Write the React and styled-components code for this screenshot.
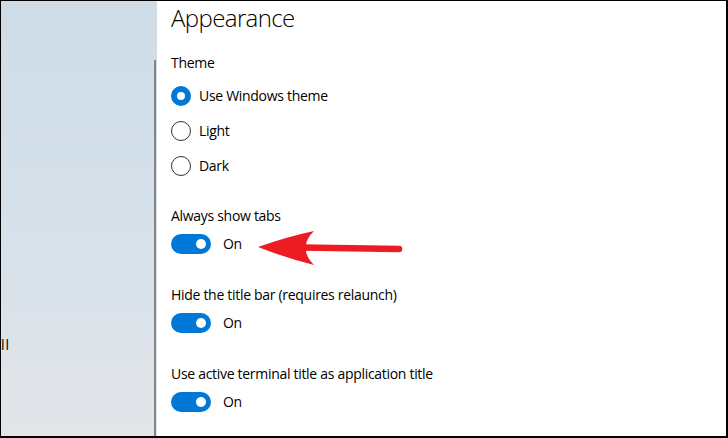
import React from "react";
import styled, { createGlobalStyle } from "styled-components";

const FONT = `"Segoe UI", "Open Sans", "Noto Sans", sans-serif`;

const GlobalStyle = createGlobalStyle`
  html, body {
    margin: 0;
    padding: 0;
    background: #ffffff;
  }
  body {
    font-family: ${FONT};
    color: #000000;
  }
`;

const themeOptions = [
  { label: "Use Windows theme", checked: true },
  { label: "Light", checked: false },
  { label: "Dark", checked: false },
];

const toggles = [
  "Always show tabs",
  "Hide the title bar (requires relaunch)",
  "Use active terminal title as application title",
];

export default function App() {
  return (
    <>
      <GlobalStyle />
      <StyledFrame>
        <StyledSidebar>
          <StyledNavColumn>
            <StyledNavText>ll</StyledNavText>
          </StyledNavColumn>
          <StyledScrollThumb />
        </StyledSidebar>
        <StyledContent>
          <StyledHeading>Appearance</StyledHeading>
          <StyledLabel>Theme</StyledLabel>
          <StyledRadioList>
            {themeOptions.map((option) => (
              <StyledRadioRow key={option.label}>
                <StyledRadio $checked={option.checked} />
                <StyledOptionText>{option.label}</StyledOptionText>
              </StyledRadioRow>
            ))}
          </StyledRadioList>
          <StyledToggleGroups>
            {toggles.map((name) => (
              <StyledToggleGroup key={name}>
                <StyledLabel>{name}</StyledLabel>
                <StyledToggleRow>
                  <StyledToggle>
                    <StyledKnob />
                  </StyledToggle>
                  <StyledToggleText>On</StyledToggleText>
                </StyledToggleRow>
              </StyledToggleGroup>
            ))}
          </StyledToggleGroups>
        </StyledContent>
        <StyledArrow viewBox="0 0 728 438" aria-hidden="true">
          <line
            x1="302"
            y1="247.5"
            x2="399"
            y2="249"
            stroke="#ed1c24"
            strokeWidth="6.5"
            strokeLinecap="round"
          />
          <path
            d="M258 247 Q286 237 314 231 Q305 240 306 247.5 Q305 256 314 265 Q286 258 258 247 Z"
            fill="#ed1c24"
          />
        </StyledArrow>
      </StyledFrame>
    </>
  );
}

const StyledFrame = styled.div`
  position: relative;
  display: flex;
  width: 728px;
  height: 438px;
  box-sizing: border-box;
  border: 1px solid #000000;
  border-right-width: 2px;
  border-bottom-width: 2px;
  overflow: hidden;
  background: #ffffff;
`;

const StyledSidebar = styled.div`
  display: flex;
  flex: 0 0 156px;
  background: linear-gradient(180deg, #cfdce6 0%, #d6e1ea 55%, #e3e5e8 100%);
`;

const StyledNavColumn = styled.div`
  flex: 1;
  padding-top: 334px;
`;

const StyledNavText = styled.div`
  font-size: 14px;
  line-height: 20px;
  color: #000000;
  letter-spacing: 1px;
`;

const StyledScrollThumb = styled.div`
  width: 2px;
  margin-top: 59px;
  margin-right: 1px;
  background: #858585;
`;

const StyledContent = styled.div`
  display: flex;
  flex-direction: column;
  flex: 1;
  padding-left: 14px;
  letter-spacing: -0.3px;
`;

const StyledHeading = styled.h1`
  margin: 1px 0 18px;
  font-size: 24px;
  line-height: 32px;
  font-weight: 300;
  letter-spacing: -0.6px;
  color: #000000;
`;

const StyledLabel = styled.div`
  font-size: 14px;
  line-height: 20px;
  padding-top: 1px;
  margin-bottom: -1px;
  color: #000000;
`;

const StyledRadioList = styled.div`
  display: flex;
  flex-direction: column;
  margin-top: 6px;
`;

const StyledRadioRow = styled.div`
  display: flex;
  align-items: center;
  height: 35px;
`;

const StyledRadio = styled.span`
  box-sizing: border-box;
  width: 20px;
  height: 20px;
  border-radius: 50%;
  margin-right: 8px;
  background: #ffffff;
  border: ${({ $checked }) =>
    $checked ? "6px solid #0078d7" : "1px solid #333333"};
`;

const StyledOptionText = styled.span`
  font-size: 14px;
  line-height: 20px;
`;

const StyledToggleGroups = styled.div`
  display: flex;
  flex-direction: column;
  gap: 30px;
  margin-top: 22px;
`;

const StyledToggleGroup = styled.div`
  display: flex;
  flex-direction: column;
  gap: 9px;
`;

const StyledToggleRow = styled.div`
  display: flex;
  align-items: center;
  height: 20px;
`;

const StyledToggle = styled.span`
  display: flex;
  align-items: center;
  justify-content: flex-end;
  box-sizing: border-box;
  width: 40px;
  height: 20px;
  padding-right: 5px;
  border-radius: 10px;
  background: #0078d7;
`;

const StyledKnob = styled.span`
  width: 10px;
  height: 10px;
  border-radius: 50%;
  background: #ffffff;
`;

const StyledToggleText = styled.span`
  margin-left: 12px;
  font-size: 14px;
  line-height: 20px;
`;

const StyledArrow = styled.svg`
  position: absolute;
  left: -1px;
  top: -1px;
  width: 728px;
  height: 438px;
  pointer-events: none;
`;
